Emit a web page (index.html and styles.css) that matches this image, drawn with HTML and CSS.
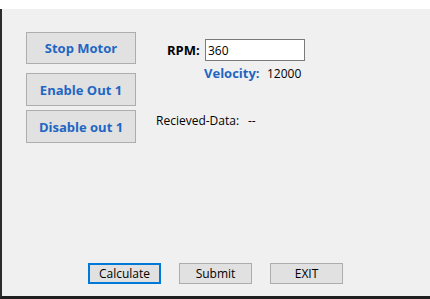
FILE: index.html
```html
<!DOCTYPE html>
<html>
<head>
<meta charset="utf-8">
<link rel="stylesheet" href="styles.css">
</head>
<body>
<div class="topbar"></div>
<div class="window">
  <div class="content">
    <div class="side-buttons">
      <button class="btn big stop">Stop Motor</button>
      <button class="btn big enable">Enable Out 1</button>
      <button class="btn big disable">Disable out 1</button>
    </div>
    <div class="panel">
      <div class="row rpm">
        <span class="lbl-black">RPM:</span>
        <div class="input">360</div>
      </div>
      <div class="row velocity">
        <span class="lbl-blue">Velocity:</span>
        <span class="val">12000</span>
      </div>
      <div class="row received">
        <span class="txt">Recieved-Data:</span>
        <span class="val dash">--</span>
      </div>
    </div>
  </div>
  <div class="footer">
    <button class="btn small focused">Calculate</button>
    <button class="btn small">Submit</button>
    <button class="btn small">EXIT</button>
  </div>
</div>
</body>
</html>
```
FILE: styles.css
```css
* { box-sizing: border-box; }
html, body {
  margin: 0;
  padding: 0;
  width: 430px;
  height: 299px;
  overflow: hidden;
  background: #ffffff;
  font-family: "Open Sans", "Noto Sans", sans-serif;
  font-size: 12px;
  color: #000;
}
.topbar {
  height: 9px;
  background: #ffffff;
}
.window {
  height: 290px;
  background: #f0f0f0;
  border-left: 2px solid #2b2b2b;
  border-bottom: 3px solid #1f1f1f;
  display: flex;
  flex-direction: column;
}
.content {
  display: flex;
  flex-direction: row;
  padding-left: 24px;
  padding-top: 23px;
}
.side-buttons {
  display: flex;
  flex-direction: column;
  width: 110px;
}
.btn {
  font-family: inherit;
  background: #e1e1e1;
  border: 1px solid #adadad;
  border-radius: 0;
  padding: 0;
  margin: 0;
  display: flex;
  align-items: center;
  justify-content: center;
}
.big {
  width: 110px;
  font-weight: 700;
  font-size: 13px;
  color: #1f66c3;
}
.stop { height: 32px; }
.enable { height: 33px; margin-top: 9px; }
.disable { height: 33px; margin-top: 4px; }
.panel {
  margin-left: 20px;
  display: flex;
  flex-direction: column;
}
.row {
  display: flex;
  align-items: center;
}
.rpm {
  margin-top: 7px;
  margin-left: 11px;
  height: 22px;
}
.lbl-black {
  font-weight: 700;
  font-size: 13px;
  color: #000;
  width: 38px;
}
.input {
  width: 100px;
  height: 22px;
  background: #fff;
  border: 1px solid #7a7a7a;
  padding-left: 2px;
  display: flex;
  align-items: center;
  font-size: 12px;
}
.velocity {
  margin-top: 4px;
  margin-left: 48px;
  height: 16px;
}
.lbl-blue {
  font-weight: 700;
  font-size: 13px;
  color: #1f66c3;
  width: 63px;
}
.val { font-size: 12px; }
.received {
  margin-top: 31px;
  height: 16px;
}
.txt {
  font-size: 12px;
  width: 92px;
}
.footer {
  margin-top: auto;
  display: flex;
  flex-direction: row;
  gap: 18px;
  padding-left: 86px;
  padding-bottom: 12px;
}
.small {
  width: 73px;
  height: 21px;
  font-size: 12px;
  color: #000;
}
.focused {
  border: 2px solid #0078d7;
}
```
